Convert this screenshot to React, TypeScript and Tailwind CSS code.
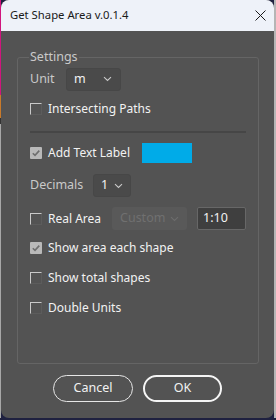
import React from 'react';

const font = { fontFamily: '"Noto Sans", "Open Sans", sans-serif' };

const Chevron: React.FC<{ className?: string }> = ({ className }) => (
    <svg width="9" height="6" viewBox="0 0 9 6" className={className}>
        <path d="M1 1.2 L4.5 4.5 L8 1.2" fill="none" stroke="currentColor" strokeWidth="1.1" />
    </svg>
);

const CheckBox: React.FC<{ checked?: boolean }> = ({ checked }) =>
    checked ? (
        <span className="w-[12px] h-[12px] flex-shrink-0 bg-[#b9b9b9] rounded-[1px] flex items-center justify-center">
            <svg width="10" height="10" viewBox="0 0 10 10">
                <path d="M1.8 5.2 L4 7.4 L8.3 2.6" fill="none" stroke="#6f6f6f" strokeWidth="1.6" />
            </svg>
        </span>
    ) : (
        <span className="w-[12px] h-[12px] flex-shrink-0 border-t border-l border-t-[#c9c9c9] border-l-[#c9c9c9] border-r border-b border-r-[#5c5c5c] border-b-[#5c5c5c]" />
    );

const CheckRow: React.FC<{ label: string; checked?: boolean; className?: string; children?: React.ReactNode }> = ({ label, checked, className, children }) => (
    <div className={`flex items-center h-[20px] ${className ?? ''}`}>
        <CheckBox checked={checked} />
        <span className="ml-[6px] text-[12px] text-[#f2f2f2] leading-none">{label}</span>
        {children}
    </div>
);

const App: React.FC = () => {
    return (
        <div className="w-[276px] h-[420px] bg-[#1f2140] flex flex-col overflow-hidden" style={font}>
            <div className="flex h-[418px]">
                <div className="w-[1px] flex flex-col flex-shrink-0">
                    <div className="h-[95px] bg-[#d0157d]" />
                    <div className="h-[23px] bg-[#c97a2a]" />
                    <div className="h-[6px] bg-[#333333]" />
                    <div className="flex-1 bg-[#a8a8a8]" />
                </div>
                <div className="w-[273px] flex flex-col rounded-t-[8px] rounded-b-[8px] overflow-hidden bg-[#535353]">
                    <div className="h-[31px] flex-shrink-0 bg-[#eef2f9] flex items-center justify-between pl-[9px] pr-[8px]">
                        <span className="text-[11.3px] text-[#1a1a1a]">Get Shape Area v.0.1.4</span>
                        <svg width="11" height="11" viewBox="0 0 11 11">
                            <path d="M0.5 0.5 L10.5 10.5 M10.5 0.5 L0.5 10.5" stroke="#1a1a1a" strokeWidth="1" />
                        </svg>
                    </div>

                    <div className="flex-1 flex flex-col px-[16px]">
                        <fieldset className="mt-[17px] h-[316px] border border-[#656565] rounded-[3px] px-[12px] flex flex-col">
                            <legend className="px-[1px] ml-[-1px] text-[12.5px] text-[#c9c9c9] leading-[18px]">Settings</legend>

                            <div className="flex items-center h-[22px] mt-[2px]">
                                <span className="w-[36px] text-[12.5px] text-[#c9c9c9] leading-none">Unit</span>
                                <div className="w-[55px] h-[23px] bg-[#4a4a4a] border border-[#474747] rounded-[3px] flex items-center justify-between pl-[7px] pr-[8px]">
                                    <span className="text-[12.5px] text-[#f2f2f2] leading-none">m</span>
                                    <Chevron className="text-[#c9c9c9]" />
                                </div>
                            </div>

                            <CheckRow label="Intersecting Paths" className="mt-[9px]" />

                            <div className="mt-[12px] h-[2px] bg-[#464646]" />

                            <CheckRow label="Add Text Label" checked className="mt-[10px]">
                                <span className="ml-[12px] w-[50px] h-[20px] bg-[#00abe8]" />
                            </CheckRow>

                            <div className="flex items-center h-[23px] mt-[11px]">
                                <span className="w-[63px] text-[12.5px] text-[#c9c9c9] leading-none">Decimals</span>
                                <div className="w-[38px] h-[23px] bg-[#4a4a4a] border border-[#474747] rounded-[3px] flex items-center justify-between pl-[7px] pr-[7px]">
                                    <span className="text-[12.5px] text-[#f2f2f2] leading-none">1</span>
                                    <Chevron className="text-[#c9c9c9]" />
                                </div>
                            </div>

                            <div className="flex items-center h-[23px] mt-[10px]">
                                <CheckBox />
                                <span className="ml-[6px] w-[64px] text-[12px] text-[#f2f2f2] leading-none">Real Area</span>
                                <div className="w-[75px] h-[23px] bg-[#595959] rounded-[3px] flex items-center justify-between pl-[8px] pr-[8px]">
                                    <span className="text-[12.5px] text-[#707070] leading-none">Custom</span>
                                    <Chevron className="text-[#6c6c6c]" />
                                </div>
                                <div className="ml-[10px] w-[49px] h-[23px] bg-[#3f3f3f] border border-[#676767] rounded-[2px] flex items-center pl-[5px]">
                                    <span className="text-[12.5px] text-[#f2f2f2] leading-none">1:10</span>
                                </div>
                            </div>

                            <CheckRow label="Show area each shape" checked className="mt-[8px]" />
                            <CheckRow label="Show total shapes" className="mt-[10px]" />
                            <CheckRow label="Double Units" className="mt-[10px]" />
                        </fieldset>

                        <div className="mt-[11px] flex justify-center gap-[10px]">
                            <button className="w-[80px] h-[27px] rounded-full border-[1.5px] border-[#e6e6e6] text-[12.5px] text-[#f2f2f2] leading-none">Cancel</button>
                            <button className="w-[79px] h-[27px] rounded-full border-2 border-[#f5f5f5] text-[12.5px] text-[#f2f2f2] leading-none">OK</button>
                        </div>
                    </div>
                </div>
                <div className="flex-1 bg-[#b5b5b5]" />
            </div>
        </div>
    );
};

export default App;
